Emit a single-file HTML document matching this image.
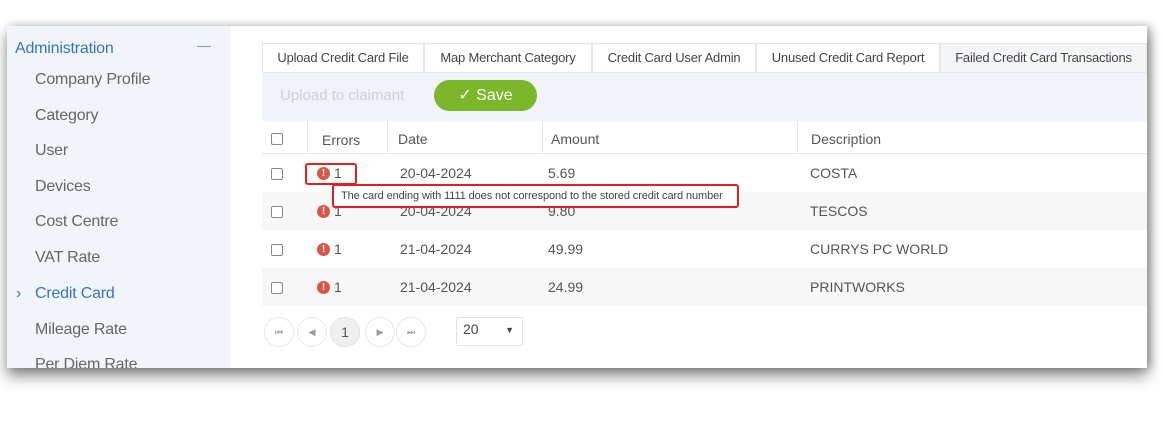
<!DOCTYPE html>
<html><head><meta charset="utf-8"><style>
*{box-sizing:border-box;margin:0;padding:0}
body{width:1163px;height:427px;background:#fff;position:relative;overflow:hidden;font-family:"Liberation Sans",sans-serif;color:#555}
.panel{position:absolute;left:7px;top:26px;width:1140px;height:342px;background:#fff;box-shadow:0 8px 14px rgba(0,0,0,.45),4px 0 8px rgba(0,0,0,.25);overflow:hidden}
.side{position:absolute;left:0;top:0;width:223px;height:342px;background:#f1f4f8}
.side div{position:absolute;left:28px;font-size:16px;color:#666;letter-spacing:-0.2px}
.a{position:absolute;font-size:14px;white-space:nowrap}
.tab{position:absolute;top:17px;height:30px;border:1px solid #e3e6ea;background:#fff;font-size:13px;color:#444;text-align:center;line-height:28px;letter-spacing:-0.2px}
.row{position:absolute;left:255px;width:885px;height:38px}
.cb{position:absolute;width:12px;height:12px;border:1px solid #888;border-radius:2px;background:#fff}
.err{position:absolute;width:13px;height:13px;border-radius:50%;background:#d9574a;color:#fff;font-size:10px;font-weight:bold;text-align:center;line-height:13px}
.pg{position:absolute;top:291px;width:30px;height:30px;border:1px solid #e8e8e8;border-radius:50%;font-size:9px;color:#999;text-align:center;line-height:28px}
</style></head><body>
<div class="panel">
 <div class="side">
  <div style="left:8px;top:14px;color:#3a74b8">Administration</div>
  <div style="left:190px;top:20px;width:14px;height:1px;background:#7a9cc6"></div>
  <div style="top:45px">Company Profile</div>
  <div style="top:81px">Category</div>
  <div style="top:116px">User</div>
  <div style="top:152px">Devices</div>
  <div style="top:187px">Cost Centre</div>
  <div style="top:223px">VAT Rate</div>
  <div style="left:9px;top:259px;color:#3a74b8">›</div>
  <div style="top:259px;color:#3a74b8">Credit Card</div>
  <div style="top:295px">Mileage Rate</div>
  <div style="top:330px">Per Diem Rate</div>
 </div>
 <div class="tab" style="left:255px;width:162px">Upload Credit Card File</div>
 <div class="tab" style="left:417px;width:168px">Map Merchant Category</div>
 <div class="tab" style="left:585px;width:164px">Credit Card User Admin</div>
 <div class="tab" style="left:749px;width:184px">Unused Credit Card Report</div>
 <div class="tab" style="left:933px;width:207px;background:#f3f5f7">Failed Credit Card Transactions</div>
 <div style="position:absolute;left:255px;top:47px;width:885px;height:48px;background:#f0f3f7"></div>
 <div class="a" style="left:273px;top:61px;font-size:15px;color:#c9d2dc">Upload to claimant</div>
 <div style="position:absolute;left:427px;top:54px;width:103px;height:31px;border-radius:16px;background:#7cb62a;color:#fff;font-size:16px;text-align:center;line-height:31px">✓ Save</div>
 <div class="row" style="top:95px;height:33px;border-bottom:1px solid #e3e6ea">
  <div class="cb" style="left:9px;top:12px"></div>
  <div style="position:absolute;left:45px;top:0;height:32px;border-left:1px solid #e3e6ea"></div>
  <div style="position:absolute;left:125px;top:0;height:32px;border-left:1px solid #e3e6ea"></div>
  <div style="position:absolute;left:280px;top:0;height:32px;border-left:1px solid #e3e6ea"></div>
  <div style="position:absolute;left:535px;top:0;height:32px;border-left:1px solid #e3e6ea"></div>
  <div class="a" style="left:60px;top:11px">Errors</div>
  <div class="a" style="left:136px;top:10px">Date</div>
  <div class="a" style="left:289px;top:10px">Amount</div>
  <div class="a" style="left:549px;top:10px">Description</div>
 </div>
 <div class="row" style="top:128px"><div class="cb" style="left:9px;top:14px"></div><div class="err" style="left:55px;top:13px">!</div><div class="a" style="left:72px;top:11px">1</div><div class="a" style="left:138px;top:11px">20-04-2024</div><div class="a" style="left:286px;top:11px">5.69</div><div class="a" style="left:548px;top:11px">COSTA</div></div>
 <div class="row" style="top:166px;background:#f7f7f7"><div class="cb" style="left:9px;top:14px"></div><div class="err" style="left:55px;top:13px">!</div><div class="a" style="left:72px;top:11px">1</div><div class="a" style="left:138px;top:11px">20-04-2024</div><div class="a" style="left:286px;top:11px">9.80</div><div class="a" style="left:548px;top:11px">TESCOS</div></div>
 <div class="row" style="top:204px"><div class="cb" style="left:9px;top:14px"></div><div class="err" style="left:55px;top:13px">!</div><div class="a" style="left:72px;top:11px">1</div><div class="a" style="left:138px;top:11px">21-04-2024</div><div class="a" style="left:286px;top:11px">49.99</div><div class="a" style="left:548px;top:11px">CURRYS PC WORLD</div></div>
 <div class="row" style="top:242px;background:#f7f7f7"><div class="cb" style="left:9px;top:14px"></div><div class="err" style="left:55px;top:13px">!</div><div class="a" style="left:72px;top:11px">1</div><div class="a" style="left:138px;top:11px">21-04-2024</div><div class="a" style="left:286px;top:11px">24.99</div><div class="a" style="left:548px;top:11px">PRINTWORKS</div></div>
 <div style="position:absolute;left:298px;top:137px;width:52px;height:22px;border:2px solid #e02020;border-radius:3px"></div>
 <div style="position:absolute;left:325px;top:158px;width:407px;height:24px;border:2px solid #e02020;border-radius:3px;background:#fff;font-size:11px;color:#444;line-height:20px;padding-left:7px;white-space:nowrap;letter-spacing:-0.1px">The card ending with 1111 does not correspond to the stored credit card number</div>
 <div class="pg" style="left:257px">⏮</div>
 <div class="pg" style="left:290px">◀</div>
 <div class="pg" style="left:323px;background:#f0f0f0;font-size:14px;color:#555;border-color:#e0e0e0">1</div>
 <div class="pg" style="left:358px">▶</div>
 <div class="pg" style="left:389px">⏭</div>
 <div style="position:absolute;left:449px;top:291px;width:67px;height:29px;border:1px solid #e3e3e3;border-radius:2px;font-size:14px;color:#444;padding:3px 0 0 6px">20<span style="position:absolute;right:8px;top:7px;font-size:9px">▼</span></div>
</div>
</body></html>
